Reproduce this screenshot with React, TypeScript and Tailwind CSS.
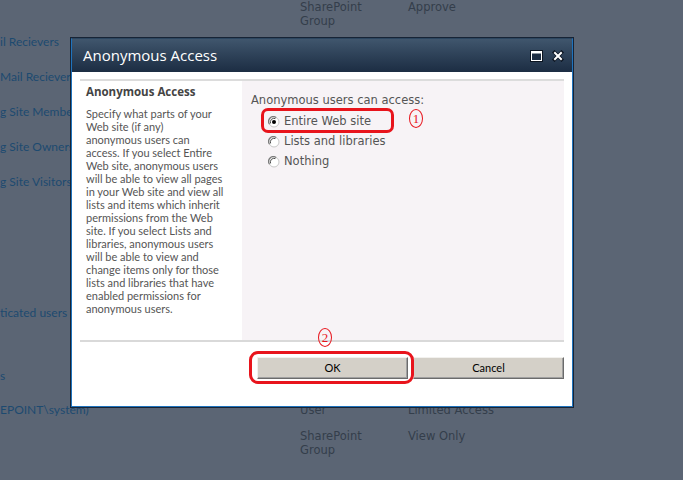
import React from 'react';

const description = [
  'Specify what parts of your',
  'Web site (if any)',
  'anonymous users can',
  'access. If you select Entire',
  'Web site, anonymous users',
  'will be able to view all pages',
  'in your Web site and view all',
  'lists and items which inherit',
  'permissions from the Web',
  'site. If you select Lists and',
  'libraries, anonymous users',
  'will be able to view and',
  'change items only for those',
  'lists and libraries that have',
  'enabled permissions for',
  'anonymous users.',
];

const options = [
  {label: 'Entire Web site', checked: true},
  {label: 'Lists and libraries', checked: false},
  {label: 'Nothing', checked: false},
];

function Radio({checked}: {checked: boolean}) {
  return (
    <svg width="12" height="12" viewBox="0 0 12 12" className="shrink-0">
      <circle cx="6" cy="6" r="5" fill="#ffffff" stroke="#c8c8c8" strokeWidth="1" />
      <path d="M1.5 8.2 A4.8 4.8 0 0 1 8.2 1.5" stroke="#7a7a7a" strokeWidth="1.1" fill="none" />
      <path d="M2.6 7.4 A3.7 3.7 0 0 1 7.4 2.6" stroke="#3a3a3a" strokeWidth="0.9" fill="none" />
      {checked && <circle cx="6" cy="6" r="2" fill="#000000" />}
    </svg>
  );
}

function Circled({n}: {n: string}) {
  return (
    <span className="flex h-[19px] w-[14px] items-center justify-center rounded-[50%] border border-[#e8141c] text-[13px] leading-none text-[#e8141c] [font-family:'Liberation_Serif',serif]">
      {n}
    </span>
  );
}

function DialogButton({label}: {label: string}) {
  return (
    <button className="h-[22px] w-[151px] border border-t-[#f2f1ee] border-l-[#f2f1ee] border-r-[#6b6b6b] border-b-[#6b6b6b] bg-[#d4d0c8] text-[11px] text-black shadow-[inset_-1px_-1px_0_#a0a0a0] [font-family:'Lato',sans-serif]">
      {label}
    </button>
  );
}

export default function App() {
  return (
    <div className="relative h-[480px] w-[683px] overflow-hidden bg-[#5b6574] [font-family:'DejaVu_Sans',Verdana,sans-serif]">
      {/* page behind the modal */}
      <div className="flex">
        <div className="flex w-[300px] flex-col text-[12px] text-[#1d4a70] [font-family:'Lato',sans-serif]">
          <div className="mt-[33px] flex flex-col gap-[17px] leading-[18px]">
            <span>il Recievers</span>
            <span>Mail Recievers</span>
            <span>g Site Members</span>
            <span>g Site Owners</span>
            <span>g Site Visitors</span>
          </div>
          <span className="mt-[113px] leading-[18px]">ticated users</span>
          <span className="mt-[45px] leading-[18px]">s</span>
          <span className="mt-[16px] leading-[18px]">EPOINT\system)</span>
        </div>
        <div className="flex flex-col text-[11.5px] leading-[14px] text-[#343e4b]">
          <div className="flex">
            <span className="w-[108px]">SharePoint<br />Group</span>
            <span>Approve</span>
          </div>
          <div className="mt-[375px] flex">
            <span className="w-[108px]">User</span>
            <span>Limited Access</span>
          </div>
          <div className="mt-[12px] flex">
            <span className="w-[108px]">SharePoint<br />Group</span>
            <span>View Only</span>
          </div>
        </div>
      </div>

      {/* modal dialog */}
      <div className="absolute left-[70px] top-[37px] h-[371px] w-[504px] border border-[#172436]">
        <div className="flex h-full flex-col border border-[#1f73bd] border-t-[#2c4660]">
          <div className="flex h-[33px] items-center justify-between bg-gradient-to-b from-[#40566d] to-[#1c2d43] pl-[11px] pr-[8px]">
            <span className="text-[15px] text-white [font-family:'Open_Sans',sans-serif]">Anonymous Access</span>
            <div className="flex items-center gap-[9px]">
              <svg width="13" height="12" viewBox="0 0 13 12">
                <rect x="0.5" y="0.5" width="12" height="11" fill="#1c2d43" stroke="#0b1420" />
                <rect x="1.5" y="1.5" width="10" height="9" fill="none" stroke="#ffffff" />
                <rect x="1.5" y="1.5" width="10" height="2" fill="#ffffff" />
              </svg>
              <svg width="12" height="12" viewBox="0 0 12 12">
                <path d="M2.5 2.5 L9.5 9.5 M9.5 2.5 L2.5 9.5" stroke="#0b1420" strokeWidth="3.6" strokeLinecap="square" />
                <path d="M3 3 L9 9 M9 3 L3 9" stroke="#ffffff" strokeWidth="2" strokeLinecap="square" />
              </svg>
            </div>
          </div>

          <div className="flex flex-1 flex-col bg-white px-[8px] pt-[7px]">
            <div className="flex h-[261px] border-t-2 border-[#dcdcdc]">
              <div className="w-[162px] pl-[6px] pt-[2px] text-[#555555] [font-family:'Lato',sans-serif]">
                <div className="text-[11.5px] font-bold leading-[18px] text-[#444444] [font-family:'Open_Sans',sans-serif]">Anonymous Access</div>
                <div className="mt-[6px] text-[11px] leading-[13px]">
                  {description.map((line) => (
                    <div key={line} className="whitespace-nowrap">{line}</div>
                  ))}
                </div>
              </div>
              <div className="relative flex-1 bg-[#f7f3f6] pl-[9px] pt-[12px] text-[11.5px] text-[#555555]">
                <div className="leading-[14px]">Anonymous users can access:</div>
                <div className="ml-[17px] mt-[5px] flex flex-col">
                  {options.map((o) => (
                    <label key={o.label} className="flex h-[20px] items-center gap-[4px]">
                      <Radio checked={o.checked} />
                      <span>{o.label}</span>
                    </label>
                  ))}
                </div>
                <div className="absolute left-[19px] top-[27px] h-[25px] w-[133px] rounded-[7px] border-[3px] border-[#e8141c]" />
                <div className="absolute left-[167px] top-[28px]">
                  <Circled n="1" />
                </div>
              </div>
            </div>
            <div className="relative h-[2px] bg-[#d9d9d9]">
              <div className="absolute left-[238px] top-[-12px]">
                <Circled n="2" />
              </div>
            </div>
            <div className="relative mt-[15px] flex justify-end gap-[5px]">
              <DialogButton label="OK" />
              <DialogButton label="Cancel" />
              <div className="absolute left-[169px] top-[-6px] h-[33px] w-[165px] rounded-[9px] border-[3px] border-[#e8141c]" />
            </div>
          </div>
        </div>
      </div>
    </div>
  );
}
